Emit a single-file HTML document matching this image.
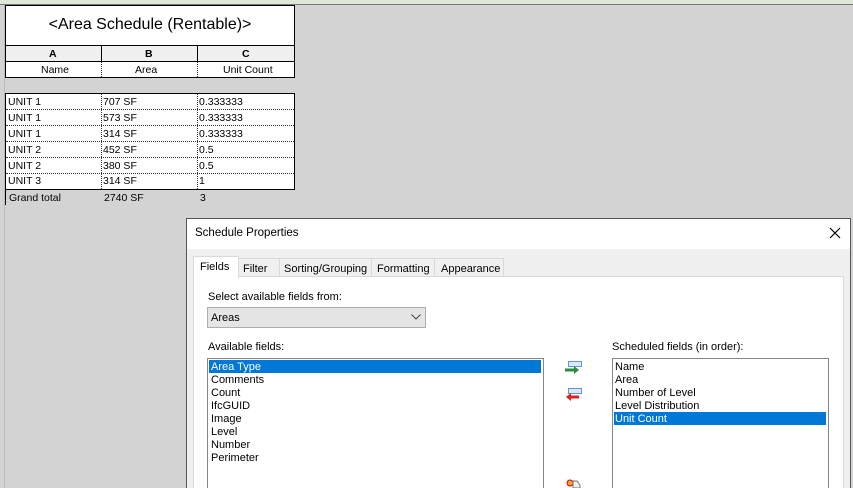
<!DOCTYPE html>
<html><head><style>
*{margin:0;padding:0;box-sizing:border-box}
html,body{width:853px;height:488px;overflow:hidden}
body{background:#d3d3d3;position:relative;font-family:"Liberation Sans",sans-serif;}
.a{position:absolute}
.t{font-size:11px;color:#000;white-space:nowrap}
.d{font-size:11.5px;color:#000;white-space:nowrap}
.row{position:absolute;left:6px;width:288px;height:16px;border-bottom:1px dotted #333;background:#fff}
.row span{position:absolute;top:2px;font-size:10.5px}
.vd{position:absolute;top:0;bottom:0;border-left:1px dotted #333}
</style></head><body>
<div class="a" style="left:0;top:0;width:853px;height:4px;background:#dfe7d7"></div>
<div class="a" style="left:0;top:4px;width:853px;height:1px;background:#777"></div>
<div class="a" style="left:4px;top:5px;width:1px;height:483px;background:#bbb"></div>

<div class="a" style="left:5px;top:5px;width:290px;height:41px;background:#fff;border:1px solid #000;font-size:16px;text-align:center;line-height:38px">&lt;Area Schedule (Rentable)&gt;</div>
<div class="a" style="left:5px;top:45px;width:290px;height:17px;background:#f0f0f0;border:1px solid #000;font-size:10.5px;font-weight:bold">
 <span class="a" style="left:43px;top:2px">A</span><span class="a" style="left:139px;top:2px">B</span><span class="a" style="left:236px;top:2px">C</span>
 <div class="a" style="left:95px;top:0;bottom:0;border-left:1px solid #000"></div>
 <div class="a" style="left:191px;top:0;bottom:0;border-left:1px solid #000"></div>
</div>
<div class="a" style="left:5px;top:61px;width:290px;height:17px;background:#fff;border:1px solid #000;font-size:10.5px">
 <span class="a" style="left:35px;top:2px">Name</span><span class="a" style="left:129px;top:2px">Area</span><span class="a" style="left:217px;top:2px">Unit Count</span>
 <div class="vd" style="left:95px"></div><div class="vd" style="left:191px"></div>
</div>
<div class="a" style="left:5px;top:93px;width:290px;height:97px;border:1px solid #000;background:#fff"></div>
<div class="row" style="top:94px"><span style="left:2px">UNIT 1</span><span style="left:97px">707 SF</span><span style="left:193px">0.333333</span><div class="vd" style="left:95px"></div><div class="vd" style="left:191px"></div></div>
<div class="row" style="top:110px"><span style="left:2px">UNIT 1</span><span style="left:97px">573 SF</span><span style="left:193px">0.333333</span><div class="vd" style="left:95px"></div><div class="vd" style="left:191px"></div></div>
<div class="row" style="top:126px"><span style="left:2px">UNIT 1</span><span style="left:97px">314 SF</span><span style="left:193px">0.333333</span><div class="vd" style="left:95px"></div><div class="vd" style="left:191px"></div></div>
<div class="row" style="top:142px"><span style="left:2px">UNIT 2</span><span style="left:97px">452 SF</span><span style="left:193px">0.5</span><div class="vd" style="left:95px"></div><div class="vd" style="left:191px"></div></div>
<div class="row" style="top:158px"><span style="left:2px">UNIT 2</span><span style="left:97px">380 SF</span><span style="left:193px">0.5</span><div class="vd" style="left:95px"></div><div class="vd" style="left:191px"></div></div>
<div class="row" style="top:174px;height:15px;border-bottom:none"><span style="left:2px;top:1px">UNIT 3</span><span style="left:97px;top:1px">314 SF</span><span style="left:193px;top:1px">1</span><div class="vd" style="left:95px"></div><div class="vd" style="left:191px"></div></div>
<div class="a" style="left:5px;top:190px;width:1px;height:15px;background:#000"></div>
<span class="a" style="left:9px;top:192px;font-size:10.5px">Grand total</span>
<span class="a" style="left:104px;top:192px;font-size:10.5px">2740 SF</span>
<span class="a" style="left:200px;top:192px;font-size:10.5px">3</span>

<!-- dialog -->
<div class="a" style="left:186px;top:218px;width:665px;height:270px;background:#f0f0f0;border:1px solid #555;border-bottom:none"></div>
<div class="a" style="left:187px;top:219px;width:663px;height:30px;background:#fff"></div>
<span class="a d" style="left:195px;top:227px">Schedule Properties</span>
<svg class="a" style="left:829px;top:227px" width="12" height="12"><path d="M1 1L11 11M11 1L1 11" stroke="#000" stroke-width="1.2"/></svg>

<div class="a" style="left:193px;top:276px;width:651px;height:212px;background:#fff;border:1px solid #d9d9d9;border-bottom:none"></div>
<div class="a" style="left:238px;top:258px;width:42px;height:19px;border:1px solid #d9d9d9;background:#f0f0f0"></div>
<div class="a" style="left:279px;top:258px;width:93px;height:19px;border:1px solid #d9d9d9;background:#f0f0f0"></div>
<div class="a" style="left:371px;top:258px;width:64px;height:19px;border:1px solid #d9d9d9;background:#f0f0f0"></div>
<div class="a" style="left:434px;top:258px;width:70px;height:19px;border:1px solid #d9d9d9;background:#f0f0f0"></div>
<div class="a" style="left:193px;top:256px;width:46px;height:22px;border:1px solid #d9d9d9;border-bottom:none;background:#fff"></div>
<span class="a t" style="left:200px;top:261px">Fields</span>
<span class="a t" style="left:243px;top:263px">Filter</span>
<span class="a t" style="left:284px;top:263px">Sorting/Grouping</span>
<span class="a t" style="left:377px;top:263px">Formatting</span>
<span class="a t" style="left:441px;top:263px">Appearance</span>

<span class="a t" style="left:208px;top:291px">Select available fields from:</span>
<div class="a" style="left:207px;top:307px;width:219px;height:21px;background:#e5e5e5;border:1px solid #adadad"></div>
<span class="a t" style="left:211px;top:312px">Areas</span>
<svg class="a" style="left:411px;top:314px" width="10" height="6"><path d="M0.5 0.5L5 5L9.5 0.5" stroke="#444" fill="none"/></svg>

<span class="a t" style="left:208px;top:341px">Available fields:</span>
<div class="a" style="left:207px;top:358px;width:337px;height:130px;background:#fff;border:1px solid #828790;border-bottom:none"></div>
<div class="a" style="left:209px;top:360px;width:332px;height:13px;background:#0078d7"></div>
<div class="a t" style="left:211px;top:361px;line-height:13px"><span style="color:#fff">Area Type</span><br>Comments<br>Count<br>IfcGUID<br>Image<br>Level<br>Number<br>Perimeter</div>

<span class="a t" style="left:612px;top:341px">Scheduled fields (in order):</span>
<div class="a" style="left:612px;top:358px;width:217px;height:130px;background:#fff;border:1px solid #828790;border-bottom:none"></div>
<div class="a" style="left:614px;top:412px;width:212px;height:13px;background:#0078d7"></div>
<div class="a t" style="left:615px;top:361px;line-height:13px">Name<br>Area<br>Number of Level<br>Level Distribution<br><span style="color:#fff">Unit Count</span></div>

<svg class="a" style="left:565px;top:360px" width="18" height="80">
 <rect x="3.5" y="1.5" width="13" height="5" fill="#dbe9f7" stroke="#5b9bd5"/>
 <path d="M0 10H10" stroke="#2e8b3a" stroke-width="3"/><path d="M9 6L14 10L9 14Z" fill="#2e8b3a"/>
 <rect x="3.5" y="28.5" width="13" height="5" fill="#dbe9f7" stroke="#5b9bd5"/>
 <path d="M4 37H14" stroke="#e02020" stroke-width="3"/><path d="M6 33L1 37L6 41Z" fill="#e02020"/>
</svg>
<svg class="a" style="left:566px;top:478px" width="16" height="10">
 <circle cx="4" cy="5" r="3" fill="#f5a623" stroke="#d0021b" stroke-width="1"/>
 <path d="M7 3L11 3L14 7L14 10L7 10Z" fill="#eee" stroke="#777"/>
</svg>
</body></html>
